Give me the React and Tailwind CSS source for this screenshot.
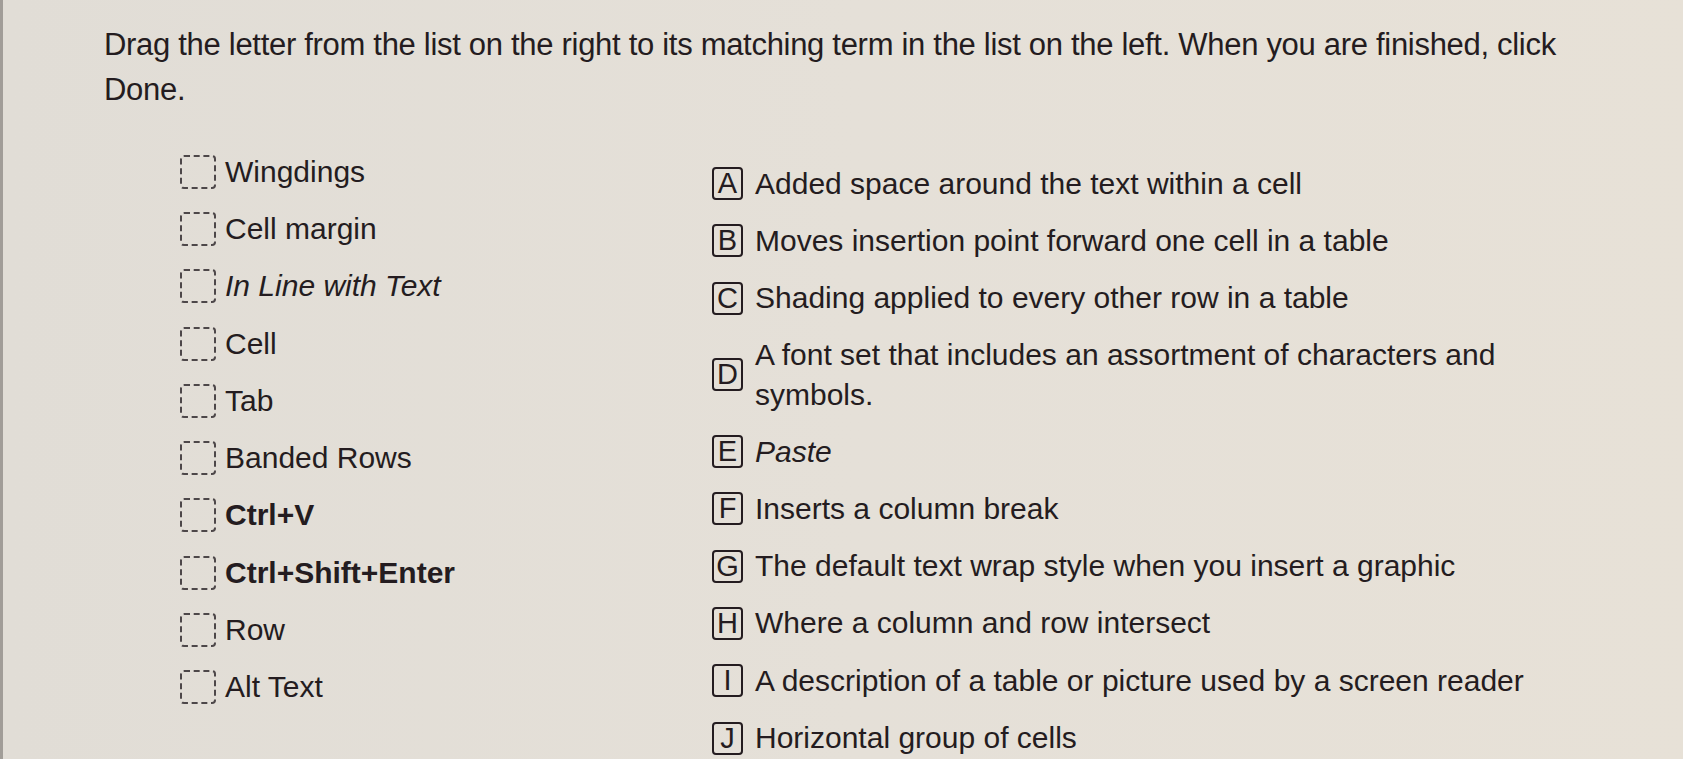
const terms = [
  { text: "Wingdings" },
  { text: "Cell margin" },
  { text: "In Line with Text", style: "italic" },
  { text: "Cell" },
  { text: "Tab" },
  { text: "Banded Rows" },
  { text: "Ctrl+V", style: "bold" },
  { text: "Ctrl+Shift+Enter", style: "bold" },
  { text: "Row" },
  { text: "Alt Text" },
];

const answers = [
  { letter: "A", text: "Added space around the text within a cell" },
  { letter: "B", text: "Moves insertion point forward one cell in a table" },
  { letter: "C", text: "Shading applied to every other row in a table" },
  { letter: "D", text: "A font set that includes an assortment of characters and symbols." },
  { letter: "E", text: "Paste", style: "italic" },
  { letter: "F", text: "Inserts a column break" },
  { letter: "G", text: "The default text wrap style when you insert a graphic" },
  { letter: "H", text: "Where a column and row intersect" },
  { letter: "I", text: "A description of a table or picture used by a screen reader" },
  { letter: "J", text: "Horizontal group of cells" },
];

const styleClass = (s) =>
  s === "italic" ? "italic" : s === "bold" ? "font-bold" : "";

export default function App() {
  return (
    <div className="w-[1683px] h-[759px] overflow-hidden bg-gradient-to-r from-[#e1ddd6] via-[#e5e0d8] to-[#e7e1d7] border-l-[3px] border-[#a19d98] text-[#241c20] font-['Liberation_Sans',Arial,sans-serif]">
      <div className="pl-[101px] pt-[22px] pr-[100px]">
        <p className="text-[31px] leading-[45px] tracking-[-0.3px] w-[1480px]">
          Drag the letter from the list on the right to its matching term in the list on the left. When you are finished, click Done.
        </p>

        <div className="flex mt-[31px]">
          <div className="w-[608px] pl-[76px] flex flex-col">
            {terms.map((t) => (
              <div key={t.text} className="h-[57.3px] flex items-center gap-[9px]">
                <div className="w-[36px] h-[34px] rounded-[4px] border-2 border-dashed border-[#4d4749] shrink-0" />
                <span className={"text-[30px] leading-[40px] " + styleClass(t.style)}>
                  {t.text}
                </span>
              </div>
            ))}
          </div>

          <div className="flex flex-col pt-[12px]">
            {answers.map((a) => (
              <div key={a.letter} className="min-h-[57.3px] py-[8px] flex items-center gap-[12px]">
                <div className="w-[31px] h-[33px] rounded-[4px] border-2 border-[#241c20] shrink-0 flex items-center justify-center text-[29px] leading-none">
                  {a.letter}
                </div>
                <span className={"text-[30px] leading-[40px] w-[800px] " + styleClass(a.style)}>
                  {a.text}
                </span>
              </div>
            ))}
          </div>
        </div>
      </div>
    </div>
  );
}
